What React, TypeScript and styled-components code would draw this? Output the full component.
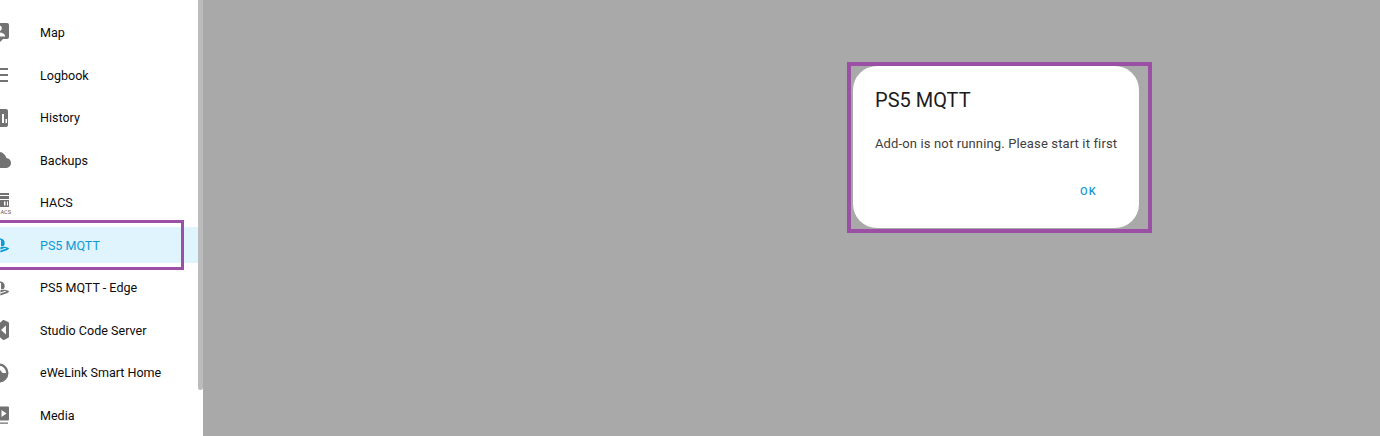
import { ReactNode } from "react";
import styled, { createGlobalStyle } from "styled-components";

const GlobalStyle = createGlobalStyle`
    html, body {
        margin: 0;
        padding: 0;
        height: 436px;
        overflow: hidden;
        background-color: #a9a9a9;
        font-family: Roboto, "Liberation Sans", sans-serif;
    }
`;

const Page = styled.div`
    display: flex;
    width: 1380px;
    height: 436px;
    overflow: hidden;
`;

const Sidebar = styled.aside`
    display: flex;
    flex-shrink: 0;
    width: 203px;
    height: 100%;
    background-color: #ffffff;
`;

const NavList = styled.nav`
    display: flex;
    flex-direction: column;
    gap: 6.5px;
    width: 198px;
    padding-top: 14.5px;
`;

const NavRow = styled.div<{ $active?: boolean }>`
    position: relative;
    display: flex;
    flex-shrink: 0;
    align-items: center;
    gap: 29px;
    height: 36px;
    color: ${(p) => (p.$active ? "#0b9ad8" : "#0c0c0c")};
    background-color: ${(p) => (p.$active ? "#e0f4fd" : "transparent")};
    font-size: 12.55px;
    font-weight: 400;
`;

const NavIcon = styled.span<{ $active?: boolean }>`
    display: flex;
    flex-shrink: 0;
    width: 24px;
    height: 24px;
    margin-left: -13px;
    color: ${(p) => (p.$active ? "#0b9ad8" : "#727272")};

    svg {
        width: 24px;
        height: 24px;
        fill: currentColor;
    }
`;

const RowMark = styled.div`
    position: absolute;
    top: -7px;
    bottom: -7px;
    left: -8px;
    right: 14px;
    border: 3px solid #9b4fa5;
`;

const ScrollTrack = styled.div`
    width: 5px;
    height: 100%;
`;

const ScrollThumb = styled.div`
    height: 390px;
    border-radius: 0 0 3px 3px;
    background-color: #bcbcbc;
`;

const Main = styled.main`
    flex: 1;
    padding: 62px 0 0 644px;
    background-color: #a9a9a9;
`;

const DialogMark = styled.div`
    width: fit-content;
    padding: 0 9px 1px 2px;
    border: 4px solid #9b4fa5;
`;

const Dialog = styled.div`
    display: flex;
    flex-direction: column;
    box-sizing: border-box;
    width: 286px;
    height: 162px;
    padding: 20px 22px 0;
    border-radius: 24px;
    background-color: #ffffff;
`;

const DialogTitle = styled.h2`
    margin: 0;
    color: #1c1c1c;
    font-size: 20px;
    font-weight: 400;
    line-height: 28px;
    letter-spacing: 0.02px;
`;

const DialogBody = styled.p`
    margin: 20px 0 0;
    color: #404040;
    font-size: 13px;
    line-height: 20px;
    letter-spacing: 0.14px;
    white-space: nowrap;
`;

const DialogActions = styled.div`
    display: flex;
    justify-content: flex-end;
    margin-top: 28px;
    padding-right: 20px;
`;

const OkButton = styled.button`
    padding: 0;
    border: none;
    background: none;
    color: #1b9bd6;
    font-family: inherit;
    font-size: 11px;
    font-weight: 500;
    line-height: 20px;
    letter-spacing: 1.25px;
`;

function Glyph({ d }: { d: string }): JSX.Element {
    return (
        <svg viewBox="0 0 24 24">
            <path fillRule="evenodd" d={d} />
        </svg>
    );
}

const playstation =
    "M9.5,4.27C10.88,4.53 12.9,5.14 14,5.5C16.75,6.45 17.69,7.63 17.69,10.29C17.69,12.89 16.08,13.87 14.04,12.89V8.05C14.04,7.5 13.94,6.97 13.41,6.82C13,6.69 12.76,7.07 12.76,7.63V19.73L9.5,18.69V4.27M13.37,17.62L18.62,15.75C19.22,15.54 19.31,15.21 18.83,15.05C18.34,14.89 17.47,14.94 16.87,15.16L13.37,16.39V14.42L13.57,14.35C13.57,14.35 14.58,14 16,13.84C17.42,13.68 19.16,13.86 20.53,14.38C22.07,14.87 22.24,15.59 21.85,16.09C21.46,16.58 20.5,16.93 20.5,16.93L13.37,19.5V17.62M3.5,17.42C1.93,17 1.66,16.05 2.38,15.5C3.05,15 4.18,14.65 4.18,14.65L8.86,13V14.88L5.5,16.09C4.9,16.3 4.81,16.6 5.29,16.76C5.77,16.92 6.65,16.88 7.24,16.66L8.86,16.08V17.77L8.54,17.83C6.92,18.09 5.2,18 3.5,17.42Z";

const HacsIcon = (
    <svg viewBox="0 0 24 24">
        <path d="M8 2h14v2H8zM8 5h14v3H8z" />
        <path fillRule="evenodd" d="M8 9h14v7H8zM17 10.500v4h1.500v-4zM20 10.500v4h1v-4z" />
        <text x="13.500" y="23" fontSize="5.500" fontFamily="Roboto, sans-serif" fill="#555">ACS</text>
    </svg>
);

const EwelinkIcon = (
    <svg viewBox="0 0 24 24">
        <path
            fillRule="evenodd"
            d="M12 2.500a9.500 9.500 0 1 0 0 19 9.500 9.500 0 0 0 0-19M12 4.800a7.200 7.200 0 0 1 7.200 7.200h-3.500L12 8z"
        />
    </svg>
);

const rows: { label: string; icon: ReactNode; active?: boolean; marked?: boolean }[] = [
    {
        label: "Map",
        icon: <Glyph d="M20 2H4a2 2 0 0 0-2 2v12a2 2 0 0 0 2 2h4l4 4 4-4h4a2 2 0 0 0 2-2V4a2 2 0 0 0-2-2M12 4.500a2.800 2.800 0 1 1 0 5.600 2.800 2.800 0 0 1 0-5.600M18 15.500H6v-1c0-2 4-3.100 6-3.100s6 1.100 6 3.100z" />,
    },
    { label: "Logbook", icon: <Glyph d="M7 5h14v2H7zM7 11h14v2H7zM7 17h14v2H7z" /> },
    {
        label: "History",
        icon: <Glyph d="M19 3H5a2 2 0 0 0-2 2v14a2 2 0 0 0 2 2h14a2 2 0 0 0 2-2V5a2 2 0 0 0-2-2M17 17h-2V8h2zM20 17h-1.500v-4H20z" />,
    },
    {
        label: "Backups",
        icon: <Glyph d="M19.35 10.04A7.490 7.490 0 0 0 12 4C9.110 4 6.600 5.640 5.350 8.040A5.994 5.994 0 0 0 0 14c0 3.310 2.690 6 6 6h13c2.760 0 5-2.240 5-5 0-2.640-2.050-4.780-4.650-4.960" />,
    },
    { label: "HACS", icon: HacsIcon },
    { label: "PS5 MQTT", icon: <Glyph d={playstation} />, active: true, marked: true },
    { label: "PS5 MQTT - Edge", icon: <Glyph d={playstation} /> },
    {
        label: "Studio Code Server",
        icon: <Glyph d="M19 16.470V7.390l-5 4.540M2.220 9.190a.760.760 0 0 1-.020-1.130l1.200-1.110c.2-.180.690-.260 1.050 0l3.420 2.610 7.930-7.250c.320-.320.870-.450 1.510-.110l4 1.910c.360.210.690.540.690 1.170v13.500c0 .420-.3.870-.630 1.050l-4.400 2.100c-.320.130-.920.010-1.130-.2l-8-7.250-3.420 2.600c-.380.260-.850.190-1.050 0l-1.200-1.100c-.320-.330-.280-.870.050-1.200l3-2.700" />,
    },
    { label: "eWeLink Smart Home", icon: EwelinkIcon },
    {
        label: "Media",
        icon: <Glyph d="M4 3.500h17a1 1 0 0 1 1 1v12a1 1 0 0 1-1 1H4zM14.500 7v7l5-3.500zM3 19.500h18v1.200H3z" />,
    },
];

function App(): JSX.Element {
    return (
        <Page>
            <GlobalStyle />
            <Sidebar>
                <NavList>
                    {rows.map((row) => (
                        <NavRow key={row.label} $active={row.active}>
                            <NavIcon $active={row.active}>{row.icon}</NavIcon>
                            {row.label}
                            {row.marked && <RowMark />}
                        </NavRow>
                    ))}
                </NavList>
                <ScrollTrack>
                    <ScrollThumb />
                </ScrollTrack>
            </Sidebar>
            <Main>
                <DialogMark>
                    <Dialog>
                        <DialogTitle>PS5 MQTT</DialogTitle>
                        <DialogBody>Add-on is not running. Please start it first</DialogBody>
                        <DialogActions>
                            <OkButton>OK</OkButton>
                        </DialogActions>
                    </Dialog>
                </DialogMark>
            </Main>
        </Page>
    );
}

export default App;
